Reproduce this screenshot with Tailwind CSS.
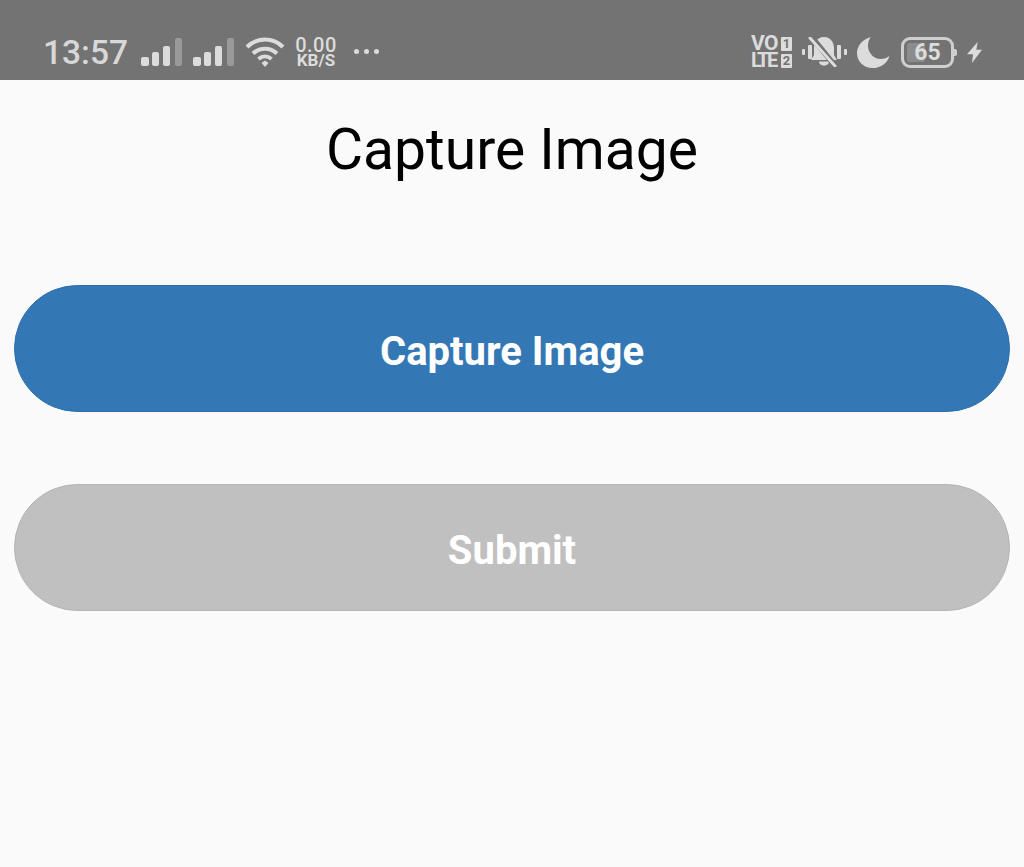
<!DOCTYPE html>
<html lang="en">
<head>
    <meta charset="UTF-8">
    <meta name="viewport" content="width=device-width, initial-scale=1.0">
    <title>Capture Image</title>
    <script src="https://cdn.jsdelivr.net/npm/@tailwindcss/browser@4"></script>
</head>
<body class="bg-[#fafafa] min-h-screen font-['Roboto',sans-serif]">

    <!-- Status bar -->
    <div class="h-20 bg-[#737373] flex items-center justify-between pl-[44px] pr-[42px] pt-[24px] text-[#dcdcdc]">
        <div class="flex items-center">
            <span class="text-[33.500px] font-medium leading-none text-[#d8d8d8] -ml-[1px] w-[85px] mt-[2px]">13:57</span>
            <svg class="ml-[13px]" width="41" height="30" viewBox="0 0 41 30"><rect x="0" y="20" width="8" height="9" rx="2" fill="#dcdcdc"/><rect x="11" y="15" width="7" height="14" rx="2" fill="#dcdcdc"/><rect x="22" y="9" width="7" height="20" rx="2" fill="#dcdcdc"/><rect x="34" y="1" width="7" height="28" rx="2" fill="#9a9a9a"/></svg>
            <svg class="ml-[11px]" width="41" height="30" viewBox="0 0 41 30"><rect x="0" y="20" width="8" height="9" rx="2" fill="#dcdcdc"/><rect x="11" y="15" width="7" height="14" rx="2" fill="#dcdcdc"/><rect x="22" y="9" width="7" height="20" rx="2" fill="#dcdcdc"/><rect x="34" y="1" width="7" height="28" rx="2" fill="#9a9a9a"/></svg>
            <svg class="ml-[11px]" width="40" height="32" viewBox="0 0 40 32" fill="none" stroke="#dcdcdc" stroke-width="4"><path d="M2 11 C12 1 28 1 38 11"/><path d="M8 17.500 C15 11 25 11 32 17.500"/><path d="M13.500 23 C17.500 19.500 22.500 19.500 26.500 23"/><path d="M16.500 27 L20 24.500 L23.500 27 L20 31 Z" fill="#dcdcdc" stroke="none"/></svg>
            <div class="ml-[11px] w-[40px] flex flex-col items-center font-medium leading-none">
                <span class="text-[20px] h-[16px] leading-[16px] tracking-[0.5px]">0.00</span>
                <span class="text-[17px] h-[14px] leading-[14px] font-bold">KB/S</span>
            </div>
            <div class="ml-[18px] flex gap-[5px] mt-[-2px]">
                <span class="w-[5px] h-[5px] rounded-full bg-[#dcdcdc]"></span>
                <span class="w-[5px] h-[5px] rounded-full bg-[#dcdcdc]"></span>
                <span class="w-[5px] h-[5px] rounded-full bg-[#dcdcdc]"></span>
            </div>
        </div>
        <div class="flex items-center">
            <div class="flex flex-col gap-[2px] font-bold w-[41px]">
                <div class="flex items-center justify-between h-[15px]">
                    <span class="text-[21px] leading-[15px] tracking-[-0.5px]">VO</span>
                    <span class="w-[11px] h-[14px] bg-[#dcdcdc] text-[#737373] text-[13px] leading-[14px] text-center rounded-[1px]">1</span>
                </div>
                <div class="flex items-center justify-between h-[15px]">
                    <span class="text-[20px] leading-[15px] tracking-[-2.500px]">LTE</span>
                    <span class="w-[11px] h-[14px] bg-[#dcdcdc] text-[#737373] text-[13px] leading-[14px] text-center rounded-[1px]">2</span>
                </div>
            </div>
            <svg class="ml-[10px]" width="45" height="30" viewBox="0 0 45 30" fill="#dcdcdc"><rect x="0" y="12" width="3" height="6" rx="1"/><rect x="6" y="8" width="4" height="14" rx="1"/><rect x="35" y="8" width="4" height="14" rx="1"/><rect x="42" y="12" width="3" height="6" rx="1"/><path d="M22 0 C15 0 12 6 12 11 L12 18 L9 23 L35 23 L32 18 L32 11 C32 6 29 0 22 0 Z"/><path d="M17 24.500 C17 30 27 30 27 24.500 Z"/><path d="M8 -2 L34 30" stroke="#737373" stroke-width="5.500"/><path d="M8 1 L33 29" stroke="#dcdcdc" stroke-width="3" stroke-linecap="round"/></svg>
            <svg class="ml-[10px]" width="33" height="33" viewBox="0 0 34 33" fill="#dcdcdc"><path d="M14 0.500 C3 4 0 12 0 17 C0 26 7 32.500 16 32.500 C24 32.500 31 28 33.500 20 C28 24.500 20 24 15.500 19.500 C10.500 14 10 7 14 0.500 Z"/></svg>
            <div class="ml-[11px] w-[53px] h-[31px] border-[3px] border-[#cfcfcf] rounded-[9px] relative flex items-center justify-center">
                <div class="absolute left-[3px] top-[3px] bottom-[3px] w-[18px] bg-[#8c8c8c] rounded-[2px]"></div>
                <span class="relative text-[23px] font-bold leading-none text-[#dcdcdc]">65</span>
                <div class="absolute right-[-6px] top-[9px] w-[3px] h-[7px] bg-[#cfcfcf] rounded-r-[2px]"></div>
            </div>
            <svg class="ml-[13px]" width="15" height="21" viewBox="0 0 15 21" fill="#dcdcdc"><path d="M10.700 0 L0 12.300 L6 12.300 L5 21 L15 7.700 L9.300 7.700 Z"/></svg>
        </div>
    </div>

    <!-- Content -->
    <h1 class="text-center text-[57px] font-normal leading-none text-black mt-[41px]">Capture Image</h1>

    <div class="mx-[14px] mt-[107px] flex flex-col gap-[72px]">
        <button class="h-[127px] rounded-[64px] bg-[#3378b5] border border-[#2a6fae] text-white text-[40px] font-bold pt-[7px]">Capture Image</button>
        <button class="h-[127px] rounded-[64px] bg-[#c0c0c0] border border-[#b4b4b4] text-white text-[40px] font-bold pt-[7px]">Submit</button>
    </div>

</body>
</html>
